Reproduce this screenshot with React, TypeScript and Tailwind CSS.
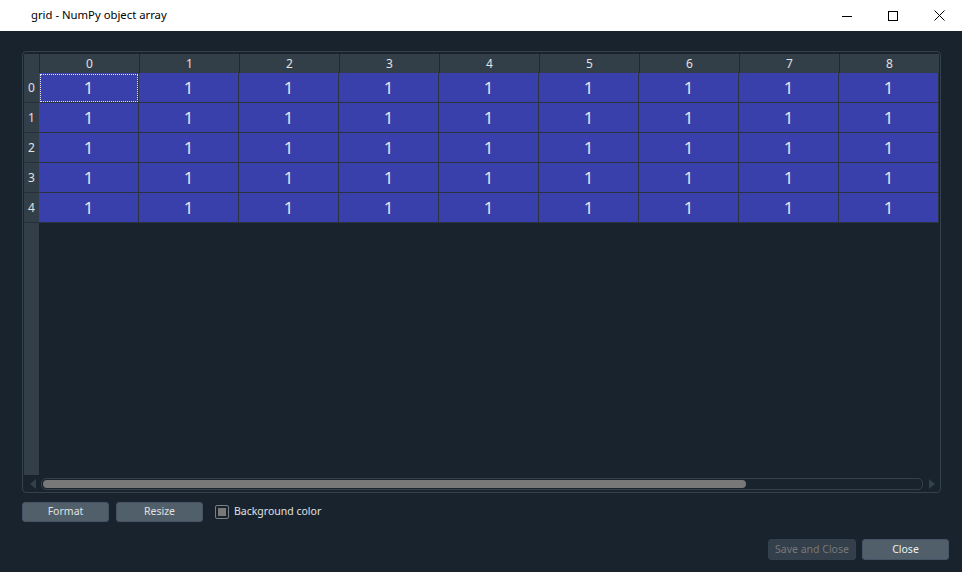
import React from "react"

const COLS = [0, 1, 2, 3, 4, 5, 6, 7, 8]
const ROWS = [0, 1, 2, 3, 4]

const font = { fontFamily: "'Noto Sans', 'Open Sans', sans-serif" }

/* ─── Title bar ─── */

function TitleBar() {
  return (
    <div className="flex h-[31px] items-center bg-white pl-[31px] text-[11.3px] text-black">
      <span className="flex-1">grid - NumPy object array</span>
      <div className="flex h-full">
        <div className="flex w-[46px] items-center justify-center">
          <svg width="10" height="10" viewBox="0 0 10 10">
            <path d="M0 5.5h10" stroke="#000" strokeWidth="1" />
          </svg>
        </div>
        <div className="flex w-[46px] items-center justify-center">
          <svg width="10" height="10" viewBox="0 0 10 10">
            <rect x="0.5" y="0.5" width="9" height="9" fill="none" stroke="#000" strokeWidth="1" />
          </svg>
        </div>
        <div className="flex w-[46px] items-center justify-center">
          <svg width="11" height="11" viewBox="0 0 11 11">
            <path d="M0.5 0.5l10 10M10.5 0.5l-10 10" stroke="#000" strokeWidth="1" />
          </svg>
        </div>
      </div>
    </div>
  )
}

/* ─── Array grid ─── */

function ArrayTable() {
  return (
    <div className="flex h-[442px] w-[919px] flex-col rounded-[4px] border border-[#32414b] pl-px pt-[2px]">
      {/* header row */}
      <div className="flex h-[19px]">
        <div className="w-[15px] bg-[#333f48]" />
        {COLS.map((c) => (
          <div
            key={c}
            className="flex w-[100px] items-center justify-center border-l border-[#1e2830] bg-[#333f48] text-[12px] text-[#e0e1e3]"
          >
            {c}
          </div>
        ))}
      </div>

      {/* body */}
      <div className="flex flex-1">
        <div className="flex w-[15px] flex-col bg-[#333f48]">
          {ROWS.map((r) => (
            <div
              key={r}
              className="flex h-[30px] items-center justify-center border-b border-[#26303a] text-[12px] text-[#e0e1e3]"
            >
              {r}
            </div>
          ))}
        </div>
        <div className="flex flex-col">
          {ROWS.map((r) => (
            <div key={r} className="flex h-[30px]">
              {COLS.map((c) => (
                <div
                  key={c}
                  className="flex w-[100px] items-center justify-center border-b border-r border-[#2c333e] bg-[#3a40ab] text-[17px] text-[#e3e5ea]"
                >
                  <span
                    className={
                      r === 0 && c === 0
                        ? "flex h-[28px] w-[98px] items-center justify-center outline-1 outline-dotted outline-[#e8e8e8] -outline-offset-1"
                        : ""
                    }
                  >
                    1
                  </span>
                </div>
              ))}
            </div>
          ))}
        </div>
      </div>

      {/* horizontal scrollbar */}
      <div className="flex h-[17px] items-center">
        <div className="flex w-[17px] items-center justify-center">
          <svg width="6" height="10" viewBox="0 0 6 10">
            <path d="M6 0v10L0 5z" fill="#32414b" />
          </svg>
        </div>
        <div className="flex h-[12px] w-[882px] items-center rounded-[5px] border border-[#32414b] px-px">
          <div className="h-[8px] w-[703px] rounded-[4px] bg-[#787878]" />
        </div>
        <div className="flex w-[17px] items-center justify-center">
          <svg width="6" height="10" viewBox="0 0 6 10">
            <path d="M0 0v10l6-5z" fill="#32414b" />
          </svg>
        </div>
      </div>
    </div>
  )
}

/* ─── Page ─── */

export default function App() {
  return (
    <div className="flex h-[572px] w-[962px] flex-col overflow-hidden bg-[#19232d]" style={font}>
      <TitleBar />

      <div className="flex flex-1 flex-col pl-[22px] pt-[20px]">
        <ArrayTable />

        <div className="mt-[9px] flex h-[20px] items-center gap-[7px] text-[10.5px]">
          <button className="h-[20px] w-[87px] rounded-[3px] border border-[#455364] bg-[#505f69] text-[#e0e1e3]">
            Format
          </button>
          <button className="h-[20px] w-[87px] rounded-[3px] border border-[#455364] bg-[#505f69] text-[#e0e1e3]">
            Resize
          </button>
          <label className="ml-[5px] flex items-center gap-[5px] text-[#e0e1e3]">
            <span className="flex h-[14px] w-[14px] items-center justify-center rounded-[2px] border border-[#788088]">
              <span className="h-[8px] w-[8px] bg-[#787878]" />
            </span>
            Background color
          </label>
        </div>

        <div className="mt-[17px] flex justify-end gap-[6px] pr-[13px] text-[10.5px]">
          <button className="h-[21px] w-[88px] rounded-[3px] border border-[#32414b] bg-[#333f4a] text-[#787878]">
            Save and Close
          </button>
          <button className="h-[21px] w-[87px] rounded-[3px] border border-[#455364] bg-[#505f69] text-[#f0f0f0]">
            Close
          </button>
        </div>
      </div>
    </div>
  )
}
